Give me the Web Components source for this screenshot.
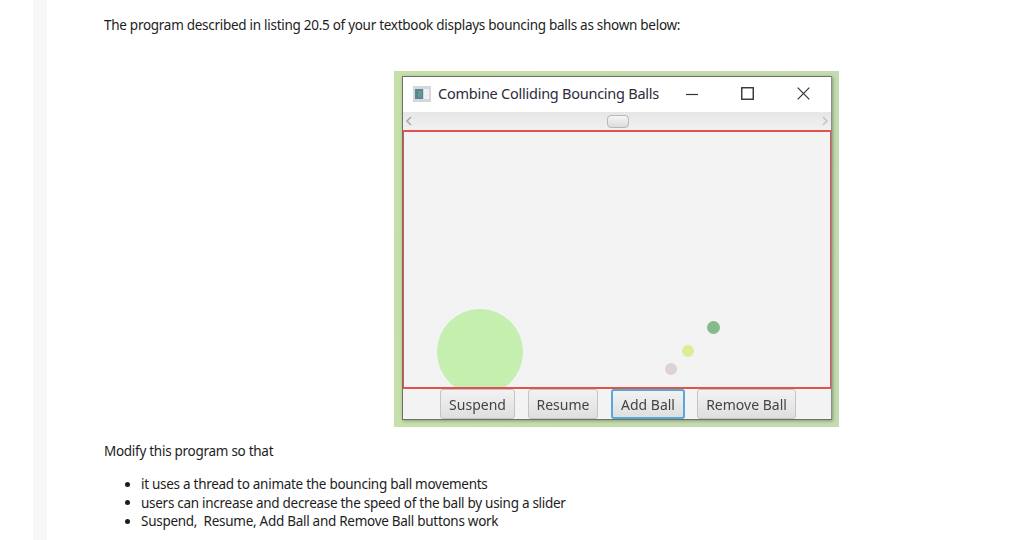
<!DOCTYPE html>
<html>
<head>
<meta charset="utf-8">
<style>
  html, body { margin: 0; height: 540px; overflow: hidden; background: #fff; }
</style>
</head>
<body>
<qa-page>
  <p-text style="padding-top:16px">The program described in listing 20.5 of your textbook displays bouncing balls as shown below:</p-text>
  <app-window title="Combine Colliding Bouncing Balls"></app-window>
  <p-text style="padding-top:15px">Modify this program so that</p-text>
  <bullet-list>
    <li-item>it uses a thread to animate the bouncing ball movements</li-item>
    <li-item>users can increase and decrease the speed of the ball by using a slider</li-item>
    <li-item>Suspend,&nbsp; Resume, Add Ball and Remove Ball buttons work</li-item>
  </bullet-list>
</qa-page>

<script>
class QaPage extends HTMLElement {
  constructor() {
    super();
    this.attachShadow({ mode: "open" }).innerHTML = `
      <style>
        :host { display: block; height: 540px; padding-left: 33px; box-sizing: border-box;
          font-family: "Noto Sans", "Open Sans", sans-serif; color: #1d1d1d; }
        .strip { border-left: 14px solid #f7f7f7; height: 100%; padding-left: 57px; }
      </style>
      <div class="strip"><slot></slot></div>`;
  }
}

class PText extends HTMLElement {
  constructor() {
    super();
    this.attachShadow({ mode: "open" }).innerHTML = `
      <style>
        :host { display: block; font-size: 13.5px; line-height: 19px; letter-spacing: -0.28px; }
      </style>
      <slot></slot>`;
  }
}

class BulletList extends HTMLElement {
  constructor() {
    super();
    this.attachShadow({ mode: "open" }).innerHTML = `
      <style>
        :host { display: block; padding: 14px 0 0 21px; }
      </style>
      <slot></slot>`;
  }
}

class LiItem extends HTMLElement {
  constructor() {
    super();
    this.attachShadow({ mode: "open" }).innerHTML = `
      <style>
        :host { display: flex; align-items: center; gap: 11px; height: 18.5px;
          font-size: 13.5px; letter-spacing: -0.28px; }
        i { width: 5px; height: 5px; border-radius: 50%; background: #1d1d1d; flex: none; }
      </style>
      <i></i><span><slot></slot></span>`;
  }
}

class JfxButton extends HTMLElement {
  constructor() {
    super();
    this.attachShadow({ mode: "open" }).innerHTML = `
      <style>
        :host { display: flex; align-items: center; justify-content: center; box-sizing: border-box;
          height: 30px; border: 1px solid #c4c4c4; border-radius: 3px;
          background: linear-gradient(#f2f2f2, #dfdfdf); color: #444;
          font-size: 14px; }
        :host([focused]) { border: 2px solid #55a8d8; }
      </style>
      <slot></slot>`;
  }
}

class AppWindow extends HTMLElement {
  constructor() {
    super();
    const title = this.getAttribute("title");
    this.removeAttribute("title");
    this.attachShadow({ mode: "open" }).innerHTML = `
      <style>
        :host { display: block; width: 445px; height: 356px; margin: 36px 0 0 290px; box-sizing: border-box;
          padding: 5px 7px 7px 8px; background: linear-gradient(100deg, #c6e0aa, #c4dab0); }
        .win { height: 344px; box-sizing: border-box; display: flex; flex-direction: column;
          border: 1px solid #6c716a; border-right-color: #8a8f88; background: #f3f3f3;
          box-shadow: 1px 1px 3px rgba(60,70,50,.45); font-family: "Noto Sans", sans-serif;
          filter: blur(.35px); }
        .title { height: 35px; flex: none; background: #fff; display: flex; align-items: center;
          box-sizing: border-box; padding: 0 0 2px 10px; color: #2c2c3a; font-size: 14.5px; letter-spacing: -0.25px; }
        .title svg.app { margin-right: 7px; }
        .title span { width: 224px; white-space: nowrap; margin-top: -2px; }
        .bar { height: 18px; flex: none; background: linear-gradient(#e6e6e6, #f1f1f1);
          display: flex; align-items: center; justify-content: space-between; padding: 0 2px; }
        .thumb { width: 20px; height: 11px; border: 1px solid #b8b8b8; border-radius: 4px;
          background: linear-gradient(#f6f6f6, #dcdcdc); margin-left: 2px; }
        .canvas { position: relative; height: 259px; flex: none; box-sizing: border-box; overflow: hidden;
          border: 1px solid #e2524e; border-width: 2px 1px 2px 1px; background: #f3f3f3; }
        .ball { position: absolute; border-radius: 50%; }
        .buttons { flex: 1; display: flex; align-items: center; padding-left: 37px; }
      </style>
      <div class="win">
        <div class="title">
          <svg class="app" width="18" height="16" viewBox="0 0 18 16">
            <rect width="18" height="16" fill="#d3d8de"/>
            <rect x="2" y="3" width="8" height="10" fill="#5d8493"/>
            <rect x="5" y="5" width="4" height="6" fill="#5f9c8b"/>
            <rect x="11" y="3" width="5" height="10" fill="#eef0f2"/>
          </svg>
          <span>${title}</span>
          <svg width="12" height="12" viewBox="0 0 12 12" style="margin-left:24px"><path d="M0 6.5h12" stroke="#333" stroke-width="1.2"/></svg>
          <svg width="13" height="13" viewBox="0 0 13 13" style="margin-left:43px"><rect x=".75" y=".75" width="11.5" height="11.5" fill="none" stroke="#333" stroke-width="1.4"/></svg>
          <svg width="13" height="13" viewBox="0 0 13 13" style="margin-left:43px"><path d="M.7.7l11.6 11.6M12.3.7L.7 12.3" fill="none" stroke="#333" stroke-width="1.2"/></svg>
        </div>
        <div class="bar">
          <svg width="8" height="10" viewBox="0 0 8 10"><path d="M6 1L2 5l4 4" fill="none" stroke="#a8a8a8" stroke-width="1.5"/></svg>
          <div class="thumb"></div>
          <svg width="8" height="10" viewBox="0 0 8 10"><path d="M2 1l4 4-4 4" fill="none" stroke="#c2c2c2" stroke-width="1.5"/></svg>
        </div>
        <div class="canvas">
          <div class="ball" style="left:33px;top:177px;width:86px;height:86px;background:#c5efaf"></div>
          <div class="ball" style="left:303px;top:189px;width:13px;height:13px;background:#85ba89"></div>
          <div class="ball" style="left:278px;top:213px;width:12px;height:12px;background:#d9ee95"></div>
          <div class="ball" style="left:261px;top:231px;width:12px;height:12px;background:#ddd2d6"></div>
        </div>
        <div class="buttons">
          <jfx-button style="width:75px">Suspend</jfx-button>
          <jfx-button style="width:70px;margin-left:13px">Resume</jfx-button>
          <jfx-button focused style="width:74px;margin-left:13px">Add Ball</jfx-button>
          <jfx-button style="width:99px;margin-left:12px">Remove Ball</jfx-button>
        </div>
      </div>`;
  }
}

customElements.define("qa-page", QaPage);
customElements.define("p-text", PText);
customElements.define("bullet-list", BulletList);
customElements.define("li-item", LiItem);
customElements.define("jfx-button", JfxButton);
customElements.define("app-window", AppWindow);
</script>
</body>
</html>
